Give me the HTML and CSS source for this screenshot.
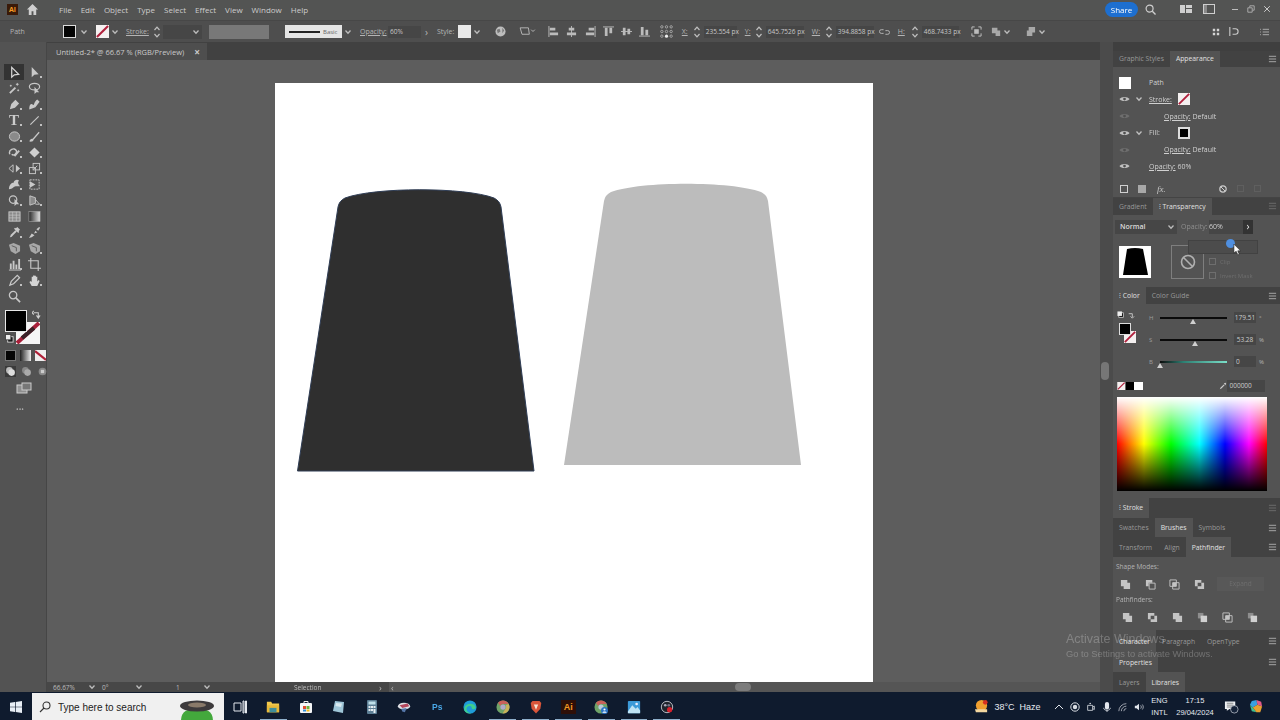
FILE: index.html
```html
<!DOCTYPE html>
<html lang="en">
<head>
<meta charset="utf-8">
<title>Adobe Illustrator</title>
<link rel="stylesheet" href="styles.css">
</head>
<body>
<svg class="defs" aria-hidden="true">
  <symbol id="chev" viewBox="0 0 8 8"><path d="M1.5 2.5 4 5.2 6.5 2.5" fill="none" stroke="currentColor" stroke-width="1.3"/></symbol>
  <symbol id="spin" viewBox="0 0 8 14"><path d="M1.5 5 4 2.2 6.5 5M1.5 9 4 11.8 6.5 9" fill="none" stroke="currentColor" stroke-width="1.2"/></symbol>
  <symbol id="none" viewBox="0 0 14 14"><rect width="14" height="14" fill="#f4f0f0"/><path d="M1 13 13 1" stroke="#b0203c" stroke-width="2.2"/></symbol>
  <symbol id="eye" viewBox="0 0 12 8"><path d="M0.5 4C2.5 1 9.500 1 11.500 4 9.500 7 2.500 7 .5 4Z" fill="currentColor"/><circle cx="6" cy="4" r="1.500" fill="#4e4e4e"/></symbol>
  <symbol id="menu" viewBox="0 0 10 8"><path d="M1 1h8M1 4h8M1 7h8" stroke="currentColor" stroke-width="1"/></symbol>
  <symbol id="t-sel" viewBox="0 0 14 14"><path d="M4 1.500V12L6.800 9.500 11.500 9Z" fill="none" stroke="#d8d8d8" stroke-width="1.300"/></symbol>
  <symbol id="t-dir" viewBox="0 0 14 14"><path d="M4 1V12L6.800 9.500 11.500 9Z" fill="#c8c8c8"/></symbol>
  <symbol id="t-wand" viewBox="0 0 14 14"><path d="M2 12 8 6" stroke="#c8c8c8" stroke-width="2"/><path d="M10 1v3M8.500 2.500h3M3 3v2M2 4h2M11 8v2M10 9h2" stroke="#c8c8c8"/></symbol>
  <symbol id="t-lasso" viewBox="0 0 14 14"><ellipse cx="7" cy="5" rx="5.500" ry="3.500" fill="none" stroke="#c8c8c8" stroke-width="1.300"/><path d="M7 5v8l2-2 3 0Z" fill="#c8c8c8"/></symbol>
  <symbol id="t-pen" viewBox="0 0 14 14"><path d="M2 12 3.500 6.500 8 2 12 6 7.500 10.500Z" fill="#c8c8c8"/></symbol>
  <symbol id="t-curv" viewBox="0 0 14 14"><path d="M1.500 12.500C1 8 3 5 5 7 7 9 6 4 10 1.500L12.500 4 8 10Z" fill="#c8c8c8"/></symbol>
  <symbol id="t-line" viewBox="0 0 14 14"><path d="M2.500 11.500 11.500 2.500" stroke="#c8c8c8" stroke-width="1.200"/></symbol>
  <symbol id="t-ell" viewBox="0 0 14 14"><ellipse cx="7" cy="7" rx="5.500" ry="5" fill="#8a8a8a" stroke="#c8c8c8"/></symbol>
  <symbol id="t-brush" viewBox="0 0 14 14"><path d="M1.500 12.500C2 9.500 4 9 5 9.500L11.500 2 12.500 3 6 10.500C6 12 4 13 1.500 12.500Z" fill="#c8c8c8"/></symbol>
  <symbol id="t-shaper" viewBox="0 0 14 14"><path d="M2 9C0 4 7 1 9 5 10 8 6 11 4 9" fill="none" stroke="#c8c8c8" stroke-width="1.500"/><path d="M7 11 12 5" stroke="#c8c8c8" stroke-width="2"/></symbol>
  <symbol id="t-eras" viewBox="0 0 14 14"><path d="M7 1.500 12.500 7 7 12.500 1.500 7Z" fill="#d0d0d0"/></symbol>
  <symbol id="t-refl" viewBox="0 0 14 14"><path d="M5.500 3V11L1 7Z" fill="none" stroke="#c8c8c8"/><path d="M8.500 3V11L13 7Z" fill="#c8c8c8"/></symbol>
  <symbol id="t-scale" viewBox="0 0 14 14"><rect x="1.500" y="6" width="6.500" height="6.500" fill="none" stroke="#c8c8c8"/><rect x="5.500" y="1.500" width="7" height="7" fill="none" stroke="#c8c8c8"/><path d="M6 8 10 4" stroke="#c8c8c8"/></symbol>
  <symbol id="t-warp" viewBox="0 0 14 14"><path d="M1 12C1 7 4 5 6 5 7 2 10 1 12 3 10 4 11 7 13 9 10 9 8 8 6 10 4 12 3 12 1 12Z" fill="#c8c8c8"/></symbol>
  <symbol id="t-free" viewBox="0 0 14 14"><rect x="2" y="2" width="10" height="10" fill="none" stroke="#c8c8c8" stroke-dasharray="2 1"/><path d="M2 3.500 8 7 2 10.500Z" fill="#c8c8c8"/></symbol>
  <symbol id="t-build" viewBox="0 0 14 14"><circle cx="5.500" cy="6" r="4" fill="none" stroke="#c8c8c8" stroke-width="1.300"/><path d="M7 5V13L9 11 12 11Z" fill="#c8c8c8"/></symbol>
  <symbol id="t-persp" viewBox="0 0 14 14"><path d="M2 2 8 4V10L2 12Z" fill="#8a8a8a" stroke="#c8c8c8"/><path d="M8 6 12.500 11H8" fill="none" stroke="#c8c8c8"/></symbol>
  <symbol id="t-mesh" viewBox="0 0 14 14"><rect x="1" y="2" width="12" height="10" fill="#8a8a8a" stroke="#c8c8c8"/><path d="M5 2V12M9 2V12M1 5.500H13M1 8.500H13" stroke="#c8c8c8" stroke-width=".7"/></symbol>
  <symbol id="t-grad" viewBox="0 0 14 14"><defs><linearGradient id="gr"><stop offset="0" stop-color="#2a2a2a"/><stop offset="1" stop-color="#e4e4e4"/></linearGradient></defs><rect x="1" y="1.500" width="12" height="11" fill="url(#gr)" stroke="#aaa" stroke-width=".6"/></symbol>
  <symbol id="t-drop" viewBox="0 0 14 14"><path d="M2 12.500 3 9.500 8 4.500 9.500 6 4.500 11Z" fill="#c8c8c8"/><path d="M8.500 2.500 10 1 13 4 11.500 5.500 12 6.500 11 7.500 6.500 3 7.500 2Z" fill="#c8c8c8"/></symbol>
  <symbol id="t-blend" viewBox="0 0 14 14"><path d="M1 13 4 8 7 10 4 12ZM6.500 8 8 5 10 7ZM9 3.500 12 1 13 2 11 5Z" fill="#c8c8c8"/></symbol>
  <symbol id="t-symb" viewBox="0 0 14 14"><path d="M1 3 6 1 13 4 13 10 8 13 3 10Z" fill="#a8a8a8"/><path d="M4 4 9 6V10" fill="none" stroke="#5a5a5a"/></symbol>
  <symbol id="t-graph" viewBox="0 0 14 14"><path d="M2 6h2v6H2zM5 3h2v9H5zM8 7h2v5H8zM11 1h2v11h-2z" fill="#c8c8c8"/><path d="M1 13h13" stroke="#c8c8c8"/></symbol>
  <symbol id="t-art" viewBox="0 0 14 14"><path d="M3 0V11H14M0 3H11V14" fill="none" stroke="#c8c8c8" stroke-width="1.200"/></symbol>
  <symbol id="t-slice" viewBox="0 0 14 14"><path d="M2 12 3.500 8 10 1.500 12.500 4 6 10.500Z" fill="none" stroke="#c8c8c8" stroke-width="1.300"/></symbol>
  <symbol id="t-hand" viewBox="0 0 14 14"><path d="M4 13 1.500 8.500 3 7.500 4 8.500V3H5.500V6.500V1.500H7V6.500V2H8.500V6.500V3H10V8L11.500 6.500 12.500 7.500 10 13Z" fill="#d4d4d4"/></symbol>
  <symbol id="t-zoom" viewBox="0 0 14 14"><circle cx="5.500" cy="5.500" r="4" fill="none" stroke="#c8c8c8" stroke-width="1.400"/><path d="M8.500 8.500 13 13" stroke="#c8c8c8" stroke-width="1.800"/></symbol>
  <symbol id="al-l" viewBox="0 0 12 12"><path d="M1 0V12" stroke="#bbb"/><path d="M2 2h6v3H2zM2 7h9v3H2z" fill="#bbb"/></symbol>
  <symbol id="al-c" viewBox="0 0 12 12"><path d="M6 0V12" stroke="#bbb"/><path d="M3 2h6v3H3zM1 7h10v3H1z" fill="#bbb"/></symbol>
  <symbol id="al-r" viewBox="0 0 12 12"><path d="M11 0V12" stroke="#bbb"/><path d="M4 2h6v3H4zM1 7h9v3H1z" fill="#bbb"/></symbol>
  <symbol id="al-t" viewBox="0 0 12 12"><path d="M0 1H12" stroke="#bbb"/><path d="M2 2h3v9H2zM7 2h3v6H7z" fill="#bbb"/></symbol>
  <symbol id="al-m" viewBox="0 0 12 12"><path d="M0 6H12" stroke="#bbb"/><path d="M2 2h3v8H2zM7 3h3v6H7z" fill="#bbb"/></symbol>
  <symbol id="al-b" viewBox="0 0 12 12"><path d="M0 11H12" stroke="#bbb"/><path d="M2 1h3v9H2zM7 4h3v6H7z" fill="#bbb"/></symbol>
  <symbol id="pf-a" viewBox="0 0 12 12"><path d="M1 1h7v3h3v7H4V8H1z" fill="#c4c4c4"/></symbol>
  <symbol id="pf-b" viewBox="0 0 12 12"><path d="M1 1h7v3H4v4H1z" fill="#c4c4c4"/><path d="M4.500 4.500h6.500v6.500H4.500z" fill="none" stroke="#c4c4c4"/></symbol>
  <symbol id="pf-c" viewBox="0 0 12 12"><path d="M1 1h7v7H1zM4 4h7v7H4z" fill="none" stroke="#c4c4c4"/><path d="M4 4h4v4H4z" fill="#c4c4c4"/></symbol>
  <symbol id="pf-d" viewBox="0 0 12 12"><path d="M1 1h7v3H4v4H1zM8 4h3v7H4V8h4z" fill="#c4c4c4"/></symbol>
  <symbol id="pf-e" viewBox="0 0 12 12"><path d="M1 1h6v6H1z" fill="#8e8e8e"/><path d="M4 4h7v7H4z" fill="#d0d0d0"/></symbol>
</svg>

<div class="app">
  <header class="menubar">
    <span class="ai-logo">Ai</span>
    <svg class="home" viewBox="0 0 14 14"><path d="M7 1 1 7h2v6h3V9h2v4h3V7h2Z" fill="#cfcfcf"/></svg>
    <nav class="menus"><span>File</span><span>Edit</span><span>Object</span><span>Type</span><span>Select</span><span>Effect</span><span>View</span><span>Window</span><span>Help</span></nav>
    <div class="win">
      <span class="share">Share</span>
      <svg class="wi" viewBox="0 0 12 12"><circle cx="5" cy="5" r="3.800" fill="none" stroke="#cfcfcf" stroke-width="1.300"/><path d="M8 8 11.500 11.500" stroke="#cfcfcf" stroke-width="1.500"/></svg>
      <svg class="wi wi-a" viewBox="0 0 12 10"><path d="M0 1h5v8H0zM6 1h6v3H6zM6 5h6v4H6z" fill="#cfcfcf"/></svg>
      <svg class="wi wi-b" viewBox="0 0 12 10"><rect x=".5" y=".5" width="11" height="9" fill="none" stroke="#cfcfcf"/><path d="M1 1h3v8H1z" fill="#8a8a8a"/></svg>
      <span class="wc wc-min"></span>
      <svg class="wc-max" viewBox="0 0 10 10"><path d="M1 3.500h5.500V9H1zM3.500 3V1H9v5.500H7" fill="none" stroke="#bdbdbd"/></svg>
      <svg class="wc-close" viewBox="0 0 10 10"><path d="M1.500 1.500 8.500 8.500M8.500 1.500 1.500 8.500" stroke="#d0d0d0" stroke-width="1.200"/></svg>
    </div>
  </header>

  <div class="ctrl">
    <span class="lbl c-path">Path</span>
    <span class="sw sw-black"></span>
    <svg class="ch c-chev1"><use href="#chev"/></svg>
    <svg class="sw"><use href="#none"/></svg>
    <svg class="ch c-chev2"><use href="#chev"/></svg>
    <span class="lbl c-stroke u">Stroke:</span>
    <svg class="spn"><use href="#spin"/></svg>
    <span class="drop c-sdrop"><svg class="ch"><use href="#chev"/></svg></span>
    <span class="greybox"></span>
    <span class="brushbox"><i></i><span>Basic</span></span>
    <svg class="ch c-chev3"><use href="#chev"/></svg>
    <span class="lbl c-op u">Opacity:</span>
    <span class="field c-opf">60%</span>
    <span class="lbl c-gt">›</span>
    <span class="lbl c-style">Style:</span>
    <span class="sw sw-style"></span>
    <svg class="ch c-chev4"><use href="#chev"/></svg>
    <svg class="globe" viewBox="0 0 12 12"><circle cx="6" cy="6" r="5.500" fill="#bdbdbd"/><path d="M2 4 5 3 6 6 3 8ZM8 2 10 5 8 8Z" fill="#777"/></svg>
    <svg class="shapebox" viewBox="0 0 18 12"><path d="M1 2h9l1 7H3ZM13 4l2 2 2-2" fill="none" stroke="#bbb"/></svg>
    <div class="aligns">
      <svg><use href="#al-l"/></svg><svg><use href="#al-c"/></svg><svg><use href="#al-r"/></svg><svg><use href="#al-t"/></svg><svg><use href="#al-m"/></svg><svg><use href="#al-b"/></svg>
    </div>
    <svg class="refpt" viewBox="0 0 14 14"><g fill="none" stroke="#bbb" stroke-width=".8"><circle cx="2" cy="2" r="1.300"/><circle cx="7" cy="2" r="1.300"/><circle cx="12" cy="2" r="1.300"/><circle cx="2" cy="7" r="1.300"/><circle cx="7" cy="7" r="1.300"/><circle cx="12" cy="7" r="1.300"/><circle cx="2" cy="12" r="1.300"/><circle cx="12" cy="12" r="1.300"/></g><circle cx="7" cy="12" r="1.700" fill="#eee"/></svg>
    <span class="lbl c-x u">X:</span><svg class="spn"><use href="#spin"/></svg><span class="field c-xf">235.554 px</span>
    <span class="lbl c-y u">Y:</span><svg class="spn"><use href="#spin"/></svg><span class="field c-yf">645.7526 px</span>
    <span class="lbl c-w u">W:</span><svg class="spn"><use href="#spin"/></svg><span class="field c-wf">394.8858 px</span>
    <svg class="link" viewBox="0 0 12 8"><path d="M5 1.500H2.500a2 2 0 0 0 0 4H5M7 2.500H9.500a2 2 0 0 1 0 4H7" fill="none" stroke="#bbb"/></svg>
    <span class="lbl c-h u">H:</span><svg class="spn"><use href="#spin"/></svg><span class="field c-hf">468.7433 px</span>
    <svg class="iso" viewBox="0 0 12 12"><path d="M1 4V1h3M8 1h3v3M11 8v3H8M4 11H1V8" fill="none" stroke="#c4c4c4"/><rect x="3.500" y="3.500" width="5" height="5" fill="#bbb"/></svg>
    <svg class="arr arr1" viewBox="0 0 12 12"><path d="M1 2h6v3h3v6H5V8H1z" fill="#a8a8a8"/></svg>
    <svg class="ch c-chev5"><use href="#chev"/></svg>
    <svg class="arr arr2" viewBox="0 0 12 12"><path d="M4 1h7v6H8v4H2V5h2z" fill="#a8a8a8"/></svg>
    <svg class="ch c-chev6"><use href="#chev"/></svg>
    <svg class="dots" viewBox="0 0 10 10"><path d="M1 1h3v3H1zM6 1h3v3H6zM1 6h3v3H1zM6 6h3v3H6z" fill="#d4d4d4"/></svg>
    <svg class="snap" viewBox="0 0 12 12"><path d="M2 1V11M5 3h3a3 3 0 0 1 0 6H5" fill="none" stroke="#ccc" stroke-width="1.200"/></svg>
    <svg class="lst" viewBox="0 0 10 8"><path d="M0 1h1M3 1h7M0 4h1M3 4h7M0 7h1M3 7h7" stroke="#b4b4b4"/></svg>
  </div>

  <div class="work">
    <aside class="tools">
      <div class="tool-grid">
        <span class="tool active"><svg><use href="#t-sel"/></svg></span><span class="tool m"><svg><use href="#t-dir"/></svg></span>
        <span class="tool"><svg><use href="#t-wand"/></svg></span><span class="tool"><svg><use href="#t-lasso"/></svg></span>
        <span class="tool m"><svg><use href="#t-pen"/></svg></span><span class="tool m"><svg><use href="#t-curv"/></svg></span>
        <span class="tool m tool-t">T</span><span class="tool m"><svg><use href="#t-line"/></svg></span>
        <span class="tool m"><svg><use href="#t-ell"/></svg></span><span class="tool m"><svg><use href="#t-brush"/></svg></span>
        <span class="tool m"><svg><use href="#t-shaper"/></svg></span><span class="tool m"><svg><use href="#t-eras"/></svg></span>
        <span class="tool m"><svg><use href="#t-refl"/></svg></span><span class="tool m"><svg><use href="#t-scale"/></svg></span>
        <span class="tool m"><svg><use href="#t-warp"/></svg></span><span class="tool"><svg><use href="#t-free"/></svg></span>
        <span class="tool m"><svg><use href="#t-build"/></svg></span><span class="tool m"><svg><use href="#t-persp"/></svg></span>
        <span class="tool"><svg><use href="#t-mesh"/></svg></span><span class="tool"><svg><use href="#t-grad"/></svg></span>
        <span class="tool m"><svg><use href="#t-drop"/></svg></span><span class="tool"><svg><use href="#t-blend"/></svg></span>
        <span class="tool"><svg><use href="#t-symb"/></svg></span><span class="tool m"><svg><use href="#t-symb"/></svg></span>
        <span class="tool m"><svg><use href="#t-graph"/></svg></span><span class="tool"><svg><use href="#t-art"/></svg></span>
        <span class="tool m"><svg><use href="#t-slice"/></svg></span><span class="tool m"><svg><use href="#t-hand"/></svg></span>
        <span class="tool"><svg><use href="#t-zoom"/></svg></span>
      </div>
      <div class="fillstroke">
        <span class="fs-fill"></span>
        <svg class="fs-stroke" viewBox="0 0 24 22"><rect width="24" height="22" fill="#f6f6f6"/><path d="M1 21 23 1" stroke="#a8203a" stroke-width="4"/><path d="M6 16 18 6" stroke="#3a2228" stroke-width="4"/></svg>
        <svg class="fs-swap" viewBox="0 0 10 10"><path d="M2 3h5v5M5 6 7 9 9 6M2 1 0 3l2 2" fill="none" stroke="#cfcfcf" stroke-width="1.200"/></svg>
        <svg class="fs-def" viewBox="0 0 10 10"><rect x="3" y="3" width="6" height="6" fill="#111" stroke="#ddd"/><rect x=".5" y=".5" width="6" height="6" fill="#eee" stroke="#444"/></svg>
      </div>
      <div class="modes">
        <span class="mode-black"></span><span class="mode-grad"></span><svg class="mode-none" viewBox="0 0 10 10"><rect width="10" height="10" fill="#eee"/><path d="M0 1 10 9" stroke="#b02038" stroke-width="2"/></svg>
      </div>
      <div class="draws">
        <svg class="draw on" viewBox="0 0 10 10"><circle cx="4" cy="4" r="3" fill="#bbb"/><circle cx="6" cy="6" r="3" fill="#ddd"/></svg>
        <svg class="draw" viewBox="0 0 10 10"><circle cx="4" cy="4" r="3" fill="#888"/><circle cx="6" cy="6" r="3" fill="#aaa"/></svg>
        <svg class="draw" viewBox="0 0 10 10"><circle cx="5" cy="5" r="3.500" fill="#888"/><rect x="3.500" y="3.500" width="3" height="3" fill="#ccc"/></svg>
      </div>
      <svg class="screen" viewBox="0 0 16 12"><rect x="1" y="3" width="10" height="8" fill="#8f8f8f" stroke="#ccc"/><rect x="6" y="1" width="9" height="7" fill="#777" stroke="#ccc"/></svg>
      <div class="more">•••</div>
    </aside>

    <main class="center">
      <div class="doctabs"><div class="doctab"><span>Untitled-2* @ 66.67 % (RGB/Preview)</span><b>×</b></div></div>
      <div class="canvas">
        <div class="artboard">
          <svg class="art" viewBox="275 83 598 599">
            <path d="M297.500 471 338 207Q339 201 345 198C375 187 465 187 494 198Q500 201 501 207L534 471Z" fill="#2f2f2f" stroke="#2f3d55" stroke-width="1"/>
            <path d="M564 465 604 201Q605 195 611 192C641 181 731 181 761 192Q767 195 768 201L801 465Z" fill="#bcbcbc"/>
          </svg>
        </div>
      </div>
      <div class="status">
        <span class="st st-zoom">66.67%</span><svg class="ch st-c1"><use href="#chev"/></svg>
        <span class="st st-rot">0°</span><svg class="ch st-c2"><use href="#chev"/></svg>
        <span class="st st-page">1</span><svg class="ch st-c3"><use href="#chev"/></svg>
        <span class="st st-sel">Selection</span>
        <span class="st st-nav">›</span>
        <div class="hscroll"><span class="st-prev">‹</span><i></i></div>
      </div>
    </main>

    <div class="vscroll"><i></i></div>

    <aside class="panels">
      <div class="collapse"></div>
      <div class="tabs t-first"><span>Graphic Styles</span><span class="on">Appearance</span><svg class="pm"><use href="#menu"/></svg></div>
      <section class="appearance">
        <div class="ap-row"><span class="ap-eye ap-thumb"><i></i></span><span class="ap-chev"></span><span class="ap-t">Path</span></div>
        <div class="ap-row"><svg class="ap-eye"><use href="#eye"/></svg><svg class="ap-chev"><use href="#chev"/></svg><span class="ap-t ap-name u">Stroke:</span><svg class="ap-sw"><use href="#none"/></svg></div>
        <div class="ap-row"><svg class="ap-eye dim"><use href="#eye"/></svg><span class="ap-chev"></span><span class="ap-t ap-in"><u>Opacity:</u> Default</span></div>
        <div class="ap-row"><svg class="ap-eye"><use href="#eye"/></svg><svg class="ap-chev"><use href="#chev"/></svg><span class="ap-t ap-name">Fill:</span><span class="ap-sw ap-fill"></span></div>
        <div class="ap-row"><svg class="ap-eye dim"><use href="#eye"/></svg><span class="ap-chev"></span><span class="ap-t ap-in"><u>Opacity:</u> Default</span></div>
        <div class="ap-row"><svg class="ap-eye"><use href="#eye"/></svg><span class="ap-chev"></span><span class="ap-t"><u>Opacity:</u> 60%</span></div>
        <div class="ap-foot">
          <span class="f-sq"></span><span class="f-fill"></span><span class="f-fx">fx.</span>
          <svg class="f-no" viewBox="0 0 8 8"><circle cx="4" cy="4" r="3.200" fill="none" stroke="#ccc" stroke-width="1.200"/><path d="M2 2 6 6" stroke="#ccc"/></svg>
          <span class="f-dim"></span><span class="f-dim"></span>
        </div>
      </section>

      <div class="tabs"><span>Gradient</span><span class="on">⁝ Transparency</span><svg class="pm dim"><use href="#menu"/></svg></div>
      <section class="transp">
        <div class="tr-top">
          <span class="tr-mode">Normal<svg class="ch"><use href="#chev"/></svg></span>
          <span class="tr-lbl">Opacity:</span>
          <span class="tr-val">60%</span>
          <span class="tr-btn">›</span>
        </div>
        <div class="tr-body">
          <svg class="thumb" viewBox="0 0 32 32"><rect width="32" height="32" fill="#fff"/><path d="M4 29 8 3Q16 1 24 3L29 29Z" fill="#000"/></svg>
          <div class="mask"><svg viewBox="0 0 16 16"><circle cx="8" cy="8" r="6.500" fill="none" stroke="#b0b0b0" stroke-width="1.600"/><path d="M3.500 3.500 12.500 12.500" stroke="#b0b0b0" stroke-width="1.600"/></svg></div>
          <div class="checks"><label><i></i>Clip</label><label><i></i>Invert Mask</label></div>
        </div>
        <div class="popup"><span class="knob"></span></div>
        <svg class="cursor" viewBox="0 0 10 14"><path d="M1 1V11L3.500 9 5.500 13 7 12.300 5.300 8.500 8.500 8.500Z" fill="#fff" stroke="#222" stroke-width=".7"/></svg>
      </section>

      <div class="tabs"><span class="on">⁝ Color</span><span>Color Guide</span><svg class="pm"><use href="#menu"/></svg></div>
      <section class="color">
        <div class="co-top">
          <div class="co-left">
            <svg class="co-def" viewBox="0 0 20 10"><rect x="2" y="2" width="5" height="5" fill="#111" stroke="#ddd" stroke-width=".8"/><rect x=".5" y=".5" width="5" height="5" fill="#eee"/><path d="M13 3h4v4M15 6l2 2 2-2" fill="none" stroke="#ccc"/></svg>
            <span class="co-fill"></span>
            <svg class="co-stroke"><use href="#none"/></svg>
          </div>
          <div class="co-sliders">
            <div class="sl"><span class="sl-l">H</span><span class="track"><i class="th th-h"></i></span><span class="sl-v">179.51</span><span class="sl-u">°</span></div>
            <div class="sl"><span class="sl-l">S</span><span class="track"><i class="th th-s"></i></span><span class="sl-v">53.28</span><span class="sl-u">%</span></div>
            <div class="sl"><span class="sl-l">B</span><span class="track track-b"><i class="th th-b"></i></span><span class="sl-v sl-d">0</span><span class="sl-u">%</span></div>
          </div>
        </div>
        <div class="co-hex">
          <svg class="hx-n"><use href="#none"/></svg><span class="hx-k"></span><span class="hx-w"></span>
          <svg class="hx-drop" viewBox="0 0 10 10"><path d="M1 9 2 7 6 3 7 4 3 8ZM6 2 8 1 9 2 8 4Z" fill="#ccc"/></svg>
          <span class="hx-v">000000</span>
        </div>
        <div class="spectrum"></div>
      </section>

      <div class="tabs t-stroke"><span class="on">⁝ Stroke</span><svg class="pm dim"><use href="#menu"/></svg></div>
      <div class="tabs t-20"><span>Swatches</span><span class="on">Brushes</span><span>Symbols</span><svg class="pm"><use href="#menu"/></svg></div>
      <div class="tabs t-20"><span>Transform</span><span>Align</span><span class="on">Pathfinder</span><svg class="pm"><use href="#menu"/></svg></div>
      <section class="path">
        <div class="pa-h">Shape Modes:</div>
        <div class="pa-i pa-modes"><svg><use href="#pf-a"/></svg><svg><use href="#pf-b"/></svg><svg><use href="#pf-c"/></svg><svg><use href="#pf-d"/></svg><span class="expand">Expand</span></div>
        <div class="pa-h pa-h2">Pathfinders:</div>
        <div class="pa-i pa-finders"><svg><use href="#pf-a"/></svg><svg><use href="#pf-d"/></svg><svg><use href="#pf-a"/></svg><svg><use href="#pf-e"/></svg><svg><use href="#pf-c"/></svg><svg><use href="#pf-e"/></svg></div>
      </section>
      <div class="tabs t-22"><span class="on">Character</span><span>Paragraph</span><span>OpenType</span><svg class="pm"><use href="#menu"/></svg></div>
      <div class="tabs t-20"><span class="on">Properties</span><svg class="pm"><use href="#menu"/></svg></div>
      <div class="tabs t-20"><span>Layers</span><span class="on">Libraries</span></div>
    </aside>
  </div>
</div>

<footer class="taskbar">
  <svg class="start" viewBox="0 0 12 12"><path d="M0 1.700 5 1V5.700H0ZM5.700 .9 12 0V5.700H5.700ZM0 6.300H5V11L0 10.300ZM5.700 6.300H12V12L5.700 11.100Z" fill="#e8eef5"/></svg>
  <div class="search">
    <svg class="s-ic" viewBox="0 0 12 12"><circle cx="7.500" cy="4.500" r="3.500" fill="none" stroke="#333" stroke-width="1.100"/><path d="M5 7 1 11" stroke="#333" stroke-width="1.100"/></svg>
    <span>Type here to search</span>
    <svg class="s-art" viewBox="0 0 44 24"><path d="M6 24C6 14 12 12 22 12S38 14 38 24Z" fill="#43a83c"/><ellipse cx="22" cy="9" rx="17" ry="5.500" fill="#3d3a3c"/><ellipse cx="22" cy="8" rx="9" ry="2.500" fill="#8a7a6a"/></svg>
  </div>
  <div class="tb-icons">
    <span class="tb"><svg viewBox="0 0 14 14"><path d="M1 3h7v8H1zM10 1h1v12h-1zM12.500 1h1v12h-1z" fill="none" stroke="#e4e8ee"/></svg></span>
    <span class="tb run"><svg viewBox="0 0 16 14"><path d="M1 1h5l1 2h8v10H1z" fill="#f2c94c"/><path d="M1 5h14v8H1z" fill="#e7b93a"/><rect x="4" y="8" width="8" height="5" fill="#3f8f9c"/></svg></span>
    <span class="tb"><svg viewBox="0 0 14 14"><rect x="1" y="3" width="12" height="10" rx="1" fill="#f3f5f7"/><path d="M5 3V1.500h4V3" fill="none" stroke="#eee"/><path d="M4 6h3v3H4z" fill="#e24a2e"/><path d="M7.500 6h3v3h-3z" fill="#6fb23c"/><path d="M4 9.500h3v2H4z" fill="#2f8fd8"/><path d="M7.500 9.500h3v2h-3z" fill="#f2b81e"/></svg></span>
    <span class="tb"><svg viewBox="0 0 14 14"><path d="M3 1 12 2 11 13 1 11Z" fill="#9fc6d8"/><path d="M4 3 10 3.500 9 7 3.500 6Z" fill="#d9eaf0"/></svg></span>
    <span class="tb"><svg viewBox="0 0 12 14"><rect x="1" width="10" height="14" rx="1" fill="#5d7f95"/><rect x="2.500" y="1.500" width="7" height="3" fill="#bfe0ea"/><path d="M2.500 6h2v2h-2zM5 6h2v2H5zM7.500 6h2v2h-2zM2.500 9h2v2h-2zM5 9h2v2H5zM7.500 9h2v4h-2z" fill="#e6eef2"/></svg></span>
    <span class="tb"><svg viewBox="0 0 16 14"><ellipse cx="8" cy="6" rx="7" ry="4" fill="#dfe2e6"/><path d="M3 5 12 3 14 6 6 8Z" fill="#b4475c"/><path d="M5 9 11 8 9 13 6 12Z" fill="#5577a8"/></svg></span>
    <span class="tb tb-ps">Ps</span>
    <span class="tb"><svg viewBox="0 0 16 16"><circle cx="8" cy="8" r="7.500" fill="#1f9cd8"/><path d="M1.500 9C3 3.500 13 2.500 14.500 8.500 15 11 10 11 10 9 10 6 4 6 4 10.500 4 13 7 15 9.500 15 4 16.500 .5 13 1.500 9Z" fill="#3fcf8e"/></svg></span>
    <span class="tb run"><svg viewBox="0 0 16 16"><circle cx="8" cy="8" r="7.500" fill="#6fa368"/><path d="M8 .5A7.500 7.500 0 0 1 14.500 4.500H8A3.500 3.500 0 0 0 4.700 6.800L2.300 3A7.500 7.500 0 0 1 8 .5Z" fill="#c9605a"/><path d="M14.500 4.500A7.500 7.500 0 0 1 7.500 15.500L10.800 10A3.500 3.500 0 0 0 11 6Z" fill="#c9b25a"/><circle cx="8" cy="8" r="3" fill="#b0a8c8"/></svg></span>
    <span class="tb run"><svg viewBox="0 0 14 16"><path d="M3 1H11L13 3.500 12 10 7 15.500 2 10 1 3.500Z" fill="#d8553a"/><path d="M4.500 5H9.500L7 11Z" fill="#f4e4d4"/></svg></span>
    <span class="tb tb-ai run">Ai</span>
    <span class="tb run"><svg viewBox="0 0 16 16"><circle cx="8" cy="8" r="7.500" fill="#6fa368"/><path d="M8 .5A7.500 7.500 0 0 1 14.500 4.500H8A3.500 3.500 0 0 0 4.700 6.800L2.300 3A7.500 7.500 0 0 1 8 .5Z" fill="#c9605a"/><circle cx="8" cy="8" r="3" fill="#b8c8d8"/><circle cx="12" cy="12" r="4" fill="#2b74c4"/><circle cx="12" cy="10.800" r="1.200" fill="#fff"/><path d="M9.500 14.500C10 12.500 14 12.500 14.500 14.500Z" fill="#fff"/></svg></span>
    <span class="tb run"><svg viewBox="0 0 16 16"><rect x="1" y="1" width="14" height="14" rx="1" fill="#3c9ad8"/><path d="M1 13 6 6 10 10 12 8 15 12V15H1Z" fill="#bfe3f4"/><circle cx="11" cy="4.500" r="1.500" fill="#eef"/></svg></span>
    <span class="tb run"><svg viewBox="0 0 16 16"><circle cx="8" cy="8" r="6.500" fill="#20242c" stroke="#c8ccd2"/><circle cx="6" cy="6" r="1.500" fill="#aab"/><circle cx="10" cy="6" r="1.500" fill="#778"/><circle cx="11" cy="11" r="3" fill="#d8202c"/></svg></span>
  </div>
  <div class="tray">
    <svg class="tr-w" viewBox="0 0 16 16"><circle cx="8" cy="7" r="6" fill="#f0a030"/><path d="M1 11h13v3H2Z" fill="#f5d8a0"/><circle cx="12" cy="3.500" r="2.500" fill="#d83020"/></svg>
    <span class="tr-temp">38°C&nbsp; Haze</span>
    <svg class="tr-i tr-up" viewBox="0 0 10 10"><path d="M1 7 5 3 9 7" fill="none" stroke="#e0e4ea"/></svg>
    <svg class="tr-i" viewBox="0 0 10 10"><circle cx="5" cy="5" r="4.200" fill="none" stroke="#d8dce2"/><circle cx="5" cy="5" r="2.200" fill="#d8dce2"/></svg>
    <svg class="tr-i" viewBox="0 0 10 12"><path d="M1 4h6v6H1zM7 6l2-1v4L7 8" fill="none" stroke="#d8dce2"/><circle cx="4" cy="1.800" r="1" fill="#d8dce2"/></svg>
    <svg class="tr-i" viewBox="0 0 10 12"><rect x="2.500" width="5" height="9" rx="2.500" fill="#e4e8ee"/><path d="M1 7C1 11 9 11 9 7M5 10v2" fill="none" stroke="#e4e8ee"/></svg>
    <svg class="tr-i" viewBox="0 0 12 10"><path d="M1 10A9 9 0 0 1 10 1M4 10A6 6 0 0 1 10 4M7 10A3 3 0 0 1 10 7" fill="none" stroke="#b8bcc4"/></svg>
    <svg class="tr-i" viewBox="0 0 12 10"><path d="M1 3.500h2L6 1V9L3 6.500H1Z" fill="#e0e4ea"/><path d="M8 3C9 4 9 6 8 7M10 2C11.500 4 11.500 6 10 8" fill="none" stroke="#e0e4ea" stroke-width=".8"/></svg>
    <span class="tr-lang">ENG<br>INTL</span>
    <span class="tr-clock">17:15<br>29/04/2024</span>
    <svg class="tr-note" viewBox="0 0 16 14"><path d="M1 1h11v8H6L3 11V9H1Z" fill="#eef1f4"/><path d="M3 3h7M3 5h7M3 7h5" stroke="#555" stroke-width=".7"/><circle cx="11" cy="9.500" r="4" fill="#142238" stroke="#d8dce2" stroke-width=".7"/></svg>
    <svg class="tr-cop" viewBox="0 0 16 16"><path d="M3 2 8 1 9 6 4 9 1 6Z" fill="#39a0e0"/><path d="M8 1 13 3 14 8 9 6Z" fill="#e05a8a"/><path d="M1 6 4 9 8 14 3 13Z" fill="#3fbf90"/><path d="M9 6 14 8 12 14 8 14 4 9Z" fill="#e8a030"/></svg>
  </div>
</footer>

<div class="watermark"><div class="wm-a">Activate Windows</div><div class="wm-b">Go to Settings to activate Windows.</div></div>
</body>
</html>
```

FILE: styles.css
```css
* { box-sizing: border-box; }
html, body { margin: 0; padding: 0; width: 1280px; height: 720px; overflow: hidden; }
body { font-family: "Open Sans", "Liberation Sans", sans-serif; font-size: 7px; color: #c8c8c8; background: #535353; position: relative; }
.defs { position: absolute; width: 0; height: 0; }
svg { display: block; flex: none; }
u { text-decoration: underline; text-decoration-thickness: .5px; text-underline-offset: 1px; }
.u { text-decoration: underline; text-decoration-thickness: .5px; text-underline-offset: 1px; }

.app { height: 692px; display: flex; flex-direction: column; filter: blur(.45px); }

/* menu bar */
.menubar { height: 20px; display: flex; align-items: center; background: #535453; padding-bottom: 2px; }
.ai-logo { width: 11px; height: 11px; margin-left: 7px; background: #3a1a08; color: #f59a23; font-size: 7px; font-weight: 700; line-height: 11px; text-align: center; }
.home { width: 13px; height: 13px; margin-left: 8px; }
.menus { display: flex; gap: 9px; margin-left: 20px; font-size: 8px; color: #cccccc; }
.win { margin-left: auto; display: flex; align-items: center; height: 100%; position: relative; width: 175px; }
.share { width: 33px; height: 15px; margin-left: 0; border-radius: 8px; background: #1d6fd0; color: #fff; font-size: 8px; line-height: 15px; text-align: center; }
.wi { width: 11px; height: 11px; margin-left: 7px; }
.wi-a { margin-left: 24px; width: 12px; height: 10px; }
.wi-b { margin-left: 11px; width: 12px; height: 10px; }
.wc-min { width: 6px; height: 1px; background: #bdbdbd; margin-left: 17px; }
.wc-max { width: 8px; height: 8px; margin-left: 9px; }
.wc-close { width: 8px; height: 8px; margin-left: 8px; }

/* control bar */
.ctrl { height: 22px; display: flex; align-items: center; background: #4e4e4e; border-top: 1px solid #474747; color: #b4b4b4; }
.lbl { font-size: 7px; white-space: nowrap; }
.ch { width: 8px; height: 8px; color: #bcbcbc; }
.spn { width: 8px; height: 14px; color: #c0c0c0; }
.sw { width: 13px; height: 13px; }
.sw-black { background: #050505; border: 1px solid #ddd; margin-left: 0; }
.c-path { width: 63px; padding-left: 10px; }
.c-chev1 { margin: 0 8px 0 4px; }
.c-chev2 { margin: 0 0 0 2px; }
.c-stroke { margin-left: 7px; width: 27px; }
.c-sdrop { width: 39px; height: 14px; margin-left: 2px; background: #464646; display: flex; justify-content: flex-end; align-items: center; padding-right: 2px; }
.greybox { width: 60px; height: 14px; margin-left: 7px; background: #787878; }
.brushbox { width: 57px; height: 13px; margin-left: 16px; background: #e4e4e4; display: flex; align-items: center; color: #666; font-size: 6px; }
.brushbox i { width: 31px; height: 2px; background: #222; margin: 0 3px 0 4px; }
.c-chev3 { margin-left: 2px; }
.c-op { margin-left: 8px; width: 28px; }
.field { height: 12px; line-height: 12px; background: #464646; color: #c8c8c8; font-size: 6.500px; white-space: nowrap; padding-left: 2px; }
.c-opf { width: 33px; }
.c-gt { margin-left: 4px; font-size: 10px; width: 10px; }
.c-style { margin-left: 2px; width: 21px; }
.sw-style { background: #e8e8e8; }
.c-chev4 { margin-left: 2px; }
.globe { width: 11px; height: 11px; margin-left: 14px; }
.shapebox { width: 17px; height: 11px; margin-left: 13px; }
.aligns { display: flex; margin-left: 12px; }
.aligns svg { width: 11px; height: 11px; margin-right: 7.300px; }
.refpt { width: 13px; height: 13px; margin-left: 2px; }
.c-x { margin-left: 9px; width: 11px; }
.spn + .field { margin-left: 3px; }
.c-xf { width: 33px; }
.c-y { margin-left: 8px; width: 10px; }
.c-yf { width: 38px; }
.c-w { margin-left: 8px; width: 13px; }
.c-wf { width: 38px; }
.link { width: 11px; height: 8px; margin-left: 5px; }
.c-h { margin-left: 8px; width: 13px; }
.c-hf { width: 37px; }
.iso { width: 11px; height: 11px; margin-left: 12px; }
.arr { width: 11px; height: 11px; }
.arr1 { margin-left: 9px; }
.c-chev5 { margin-left: 1px; }
.arr2 { margin-left: 14px; }
.c-chev6 { margin-left: 2px; }
.dots { width: 8px; height: 8px; margin-left: 166px; }
.snap { width: 11px; height: 11px; margin-left: 8px; }
.lst { width: 9px; height: 8px; margin-left: 21px; }

/* workspace */
.work { flex: 1; min-height: 0; display: flex; }
.tools { width: 47px; background: #535353; padding-top: 22px; border-right: 1px solid #464646; position: relative; }
.tool-grid { display: grid; grid-template-columns: 20px 20px; grid-auto-rows: 16px; padding-left: 4px; }
.tool { display: flex; align-items: center; justify-content: center; position: relative; }
.tool svg { width: 13px; height: 13px; }
.tool.active { background: #333; }
.tool.m::after { content: ""; position: absolute; right: 2px; bottom: 2px; width: 2px; height: 2px; background: #c0c0c0; }
.tool-t { font-family: "Liberation Serif", serif; font-weight: 700; font-size: 15px; color: #cccccc; line-height: 16px; }

.fillstroke { position: relative; height: 34px; margin: 6px 0 0 5px; }
.fs-fill { position: absolute; left: 0; top: 0; width: 22px; height: 22px; background: #000; border: 1px solid #e8e8e8; z-index: 1; }
.fs-stroke { position: absolute; left: 11px; top: 12px; width: 24px; height: 22px; }
.fs-swap { position: absolute; left: 27px; top: 0; width: 9px; height: 9px; }
.fs-def { position: absolute; left: 0; top: 24px; width: 9px; height: 9px; }
.modes { display: flex; margin: 6px 0 0 5px; gap: 4px; }
.modes > * { width: 11px; height: 11px; }
.mode-black { background: #050505; border: 1px solid #777; }
.mode-grad { background: linear-gradient(90deg, #222, #eee); }
.draws { display: flex; gap: 5px; margin: 5px 0 0 5px; }
.draw { width: 11px; height: 11px; }
.draw.on { background: #3a3a3a; }
.screen { width: 16px; height: 12px; margin: 5px 0 0 16px; }
.more { margin: 11px 0 0 16px; font-size: 7px; color: #a8a8a8; }

.center { flex: 1; min-width: 0; display: flex; flex-direction: column; }
.doctabs { height: 18px; background: #414141; display: flex; align-items: flex-end; }
.doctab { width: 160px; height: 17px; background: #4e4e4e; display: flex; align-items: center; padding-left: 9px; font-size: 7.500px; color: #cacaca; }
.doctab b { margin-left: 10px; font-size: 10px; }
.canvas { flex: 1; min-height: 0; background: #5d5d5d; padding: 23px 0 0 228px; overflow: hidden; }
.artboard { width: 598px; height: 599px; background: #fff; }
.art { width: 598px; height: 599px; }
.status { height: 10px; background: #474747; display: flex; align-items: center; font-size: 6.500px; color: #bcbcbc; }
.st { white-space: nowrap; }
.st-zoom { margin-left: 6px; width: 35px; }
.st-rot { margin-left: 6px; width: 33px; }
.st-page { margin-left: 33px; width: 27px; }
.st-sel { margin-left: 83px; width: 85px; }
.st-nav { font-size: 9px; width: 10px; }
.hscroll { flex: 1; height: 10px; background: #555; position: relative; display: flex; align-items: center; padding-left: 2px; font-size: 9px; }
.hscroll i { position: absolute; left: 346px; top: 1px; width: 16px; height: 8px; border-radius: 4px; background: #7c7c7c; }

.vscroll { width: 13px; background: #4b4b4b; padding-top: 320px; }
.vscroll i { display: block; width: 8px; height: 18px; margin-left: 1px; border-radius: 4px; background: #767676; }

/* panels */
.panels { width: 167px; background: #4e4e4e; display: flex; flex-direction: column; position: relative; }
.collapse { height: 9px; background: #3f3f3f; }
.tabs { height: 17px; display: flex; align-items: stretch; background: #424242; color: #989898; font-size: 6.800px; position: relative; }
.tabs > span { display: flex; align-items: center; padding: 0 6px; white-space: nowrap; }
.tabs > .on { background: #535353; color: #e0e0e0; }
.t-first { height: 16px; }
.pm { position: absolute; right: 3px; top: 50%; margin-top: -4px; width: 9px; height: 8px; color: #b0b0b0; }
.pm.dim { color: #6e6e6e; }
.t-stroke { height: 20px; }
.t-20 { height: 20px; }
.t-22 { height: 22px; }

.appearance { height: 131px; background: #535353; padding: 7.500px 0 0 6px; border-bottom: 1px solid #444; }
.ap-row { height: 16.700px; display: flex; align-items: center; }
.ap-eye { width: 11px; height: 8px; color: #c0c0c0; margin-right: 5px; }
.ap-eye.dim { color: #6e6e6e; }
.ap-thumb { height: 12px; width: 12px; margin-left: 0; margin-right: 4px; background: #fff; }
.ap-thumb i { display: none; }
.ap-chev { width: 8px; height: 8px; margin-right: 6px; color: #c0c0c0; }
.ap-t { white-space: nowrap; color: #d0d0d0; }
.ap-name { width: 26px; }
.ap-sw { width: 12px; height: 12px; margin-left: 3px; }
.ap-fill { background: #000; border: 2px solid #ddd; }
.ap-in { margin-left: 15px; }
.ap-foot { display: flex; align-items: center; height: 16px; margin-top: 6px; padding-left: 1px; }
.f-sq { width: 8px; height: 8px; border: 1.300px solid #d0d0d0; }
.f-fill { width: 8px; height: 8px; background: #a8a8a8; margin-left: 10px; }
.f-fx { margin-left: 11px; font-family: "Liberation Serif", serif; font-style: italic; font-size: 9px; }
.f-no { width: 8px; height: 8px; margin-left: 53px; }
.f-dim { width: 7px; height: 7px; margin-left: 10px; border: 1px solid #5f5f5f; }

.transp { height: 73px; background: #535353; position: relative; padding: 5px 0 0 2px; }
.tr-top { display: flex; align-items: center; height: 14px; }
.tr-mode { width: 62px; height: 14px; background: #464646; padding: 0 2px 0 5px; display: flex; align-items: center; justify-content: space-between; color: #dcdcdc; font-weight: 600; }
.tr-lbl { margin-left: 4px; width: 28px; color: #8e8e8e; }
.tr-val { width: 34px; height: 14px; line-height: 14px; background: #464646; color: #d0d0d0; }
.tr-btn { width: 10px; height: 14px; line-height: 13px; background: #333; color: #e8e8e8; font-size: 10px; text-align: center; }
.tr-body { display: flex; margin-top: 12px; padding-left: 4px; }
.thumb { width: 32px; height: 32px; }
.mask { width: 33px; height: 34px; margin: -1px 0 0 20px; border: 1px solid #7e7e7e; display: flex; align-items: center; justify-content: center; }
.mask svg { width: 16px; height: 16px; }
.checks { margin: 12px 0 0 5px; display: flex; flex-direction: column; gap: 6px; font-size: 6px; color: #6e6e6e; }
.checks label { display: flex; align-items: center; gap: 4px; height: 8px; }
.checks i { width: 7px; height: 7px; border: 1px solid #6e6e6e; }
.popup { position: absolute; left: 75px; top: 25px; width: 70px; height: 14px; background: #4c4c4c; border: 1px solid #424242; }
.knob { position: absolute; left: 37px; top: -2px; width: 9px; height: 9px; border-radius: 50%; background: #4f8fe0; }
.cursor { position: absolute; left: 120px; top: 28px; width: 9px; height: 13px; }

.color { height: 194px; background: #535353; padding: 0 0 0 4px; }
.co-top { display: flex; height: 75px; padding-top: 7px; }
.co-left { width: 32px; position: relative; }
.co-def { width: 18px; height: 9px; }
.co-fill { position: absolute; left: 2px; top: 12px; width: 12px; height: 12px; background: #000; border: 1px solid #ddd; z-index: 1; }
.co-stroke { position: absolute; left: 7px; top: 20px; width: 12px; height: 12px; }
.co-sliders { flex: 1; display: flex; flex-direction: column; gap: 11px; padding-top: 1px; }
.sl { height: 11px; display: flex; align-items: center; }
.sl-l { width: 11px; color: #9e9e9e; font-size: 6px; }
.track { width: 67px; height: 2px; background: #0a0a0a; position: relative; }
.track-b { background: linear-gradient(90deg, #0a0a0a, #2d7f72 35%, #7adfc8); }
.th { position: absolute; top: 2px; width: 0; height: 0; border-left: 3.500px solid transparent; border-right: 3.500px solid transparent; border-bottom: 5px solid #d0d0d0; }
.th-h { left: 30px; }
.th-s { left: 32px; }
.th-b { left: -3px; }
.sl-v { width: 22px; height: 11px; margin-left: 7px; background: #464646; color: #cccccc; font-size: 6.500px; line-height: 11px; text-align: center; }
.sl-d { text-align: left; padding-left: 2px; }
.sl-u { margin-left: 3px; color: #b4b4b4; font-size: 6px; }
.co-hex { display: flex; align-items: center; height: 14px; margin-top: 0; }
.co-hex > * { flex: none; }
.hx-n, .hx-k, .hx-w { width: 8.500px; height: 8px; }
.hx-k { background: #000; }
.hx-w { background: #fff; }
.hx-drop { width: 8px; height: 8px; margin-left: 76px; }
.hx-v { width: 38px; height: 12px; margin-left: 0; background: #464646; color: #cccccc; font-size: 6.500px; line-height: 12px; padding-left: 3px; }
.spectrum { width: 150px; height: 94px; margin-top: 4px; background:
  linear-gradient(180deg, #fff 0%, rgba(255,255,255,0) 50%, rgba(0,0,0,0) 50%, #000 100%),
  linear-gradient(90deg, #f00 0%, #ff0 18%, #0f0 36%, #0ff 55%, #00f 72%, #f0f 88%, #f00 100%); }

.path { height: 73px; background: #535353; padding: 6px 0 0 3px; }
.pa-h { font-size: 6.500px; color: #b4b4b4; height: 8px; line-height: 8px; }
.pa-h2 { margin-top: 6px; }
.pa-i { display: flex; align-items: center; }
.pa-i svg { width: 11px; height: 11px; }
.pa-modes { gap: 13.500px; margin: 7px 0 0 4px; height: 12px; }
.expand { margin-left: -1px; width: 47px; height: 14px; background: #585858; color: #6e6e6e; font-size: 6.500px; line-height: 14px; text-align: center; }
.pa-finders { gap: 14px; margin: 7px 0 0 6px; height: 12px; }

/* taskbar */
.taskbar { height: 28px; background: #0f1b2e; display: flex; align-items: center; color: #e6eaf0; padding-top: 1px; }
.start { width: 12px; height: 12px; margin-left: 10px; }
.search { width: 192px; height: 28px; margin-left: 10px; background: #f0f0f0; display: flex; align-items: center; color: #222; font-family: "Liberation Sans", sans-serif; font-size: 10px; overflow: hidden; padding-top: 1px; }
.s-ic { width: 12px; height: 12px; margin: 0 7px 0 7px; }
.s-art { width: 44px; height: 24px; margin: 4px 0 0 auto; margin-right: 5px; }
.tb-icons { display: flex; height: 28px; }
.tb { width: 32.800px; height: 28px; display: flex; align-items: center; justify-content: center; position: relative; }
.tb svg { width: 14px; height: 14px; }
.tb.run::after { content: ""; position: absolute; left: 3px; right: 3px; bottom: 0; height: 2px; background: #8fb0cc; }
.tb-ps { color: #4aa8e8; font-family: "Liberation Sans", sans-serif; font-size: 8.500px; font-weight: 700; }
.tb-ai { color: #f59a23; font-family: "Liberation Sans", sans-serif; font-size: 9px; font-weight: 700; background: linear-gradient(#2e0f08, #2e0f08) center / 15px 14px no-repeat; }
.tray { margin-left: auto; display: flex; align-items: center; height: 28px; font-family: "Liberation Sans", sans-serif; font-size: 9px; }
.tr-w { width: 15px; height: 15px; }
.tr-temp { margin-left: 6px; width: 54px; white-space: nowrap; font-size: 9px; }
.tr-i { width: 10px; height: 10px; margin-right: 6px; }
.tr-up { margin-left: 5px; }
.tr-lang { font-size: 7.500px; line-height: 12px; margin-left: 1px; width: 18px; text-align: center; }
.tr-clock { font-size: 7.500px; line-height: 12px; margin-left: 5.500px; width: 42px; text-align: center; }
.tr-note { width: 15px; height: 14px; margin-left: 8px; }
.tr-cop { width: 15px; height: 15px; margin: 0 16px 0 10px; }

.watermark { position: absolute; left: 1066px; top: 631px; color: rgba(255,255,255,.24); font-family: "Liberation Sans", sans-serif; pointer-events: none; white-space: nowrap; filter: blur(.3px); }
.wm-a { font-size: 12.500px; line-height: 16px; }
.wm-b { font-size: 9.300px; line-height: 14px; }
```
